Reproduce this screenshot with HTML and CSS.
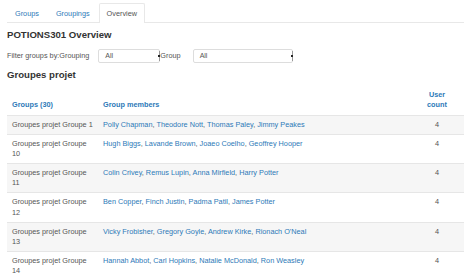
FILE: index.html
```html
<!DOCTYPE html>
<html>
<head>
<meta charset="utf-8">
<link rel="stylesheet" href="styles.css">
</head>
<body>
<div class="tabs">
  <a class="tab" href="#">Groups</a>
  <a class="tab" href="#">Groupings</a>
  <span class="tab active">Overview</span>
</div>
<h2 class="title">POTIONS301 Overview</h2>
<div class="filters">
  <span class="lbl">Filter groups by:Grouping</span>
  <span class="select s1">All<i class="arrow"></i></span>
  <span class="lbl">Group</span>
  <span class="select s2">All<i class="arrow"></i></span>
</div>
<h3 class="heading">Groupes projet</h3>
<table class="groups">
  <colgroup><col class="c1"><col class="c2"><col class="c3"></colgroup>
  <thead>
    <tr><th>Groups (30)</th><th>Group members</th><th class="num">User count</th></tr>
  </thead>
  <tbody>
    <tr><td>Groupes projet Groupe 1</td><td><a href="#">Polly Chapman</a>, <a href="#">Theodore Nott</a>, <a href="#">Thomas Paley</a>, <a href="#">Jimmy Peakes</a></td><td class="num">4</td></tr>
    <tr><td>Groupes projet Groupe 10</td><td><a href="#">Hugh Biggs</a>, <a href="#">Lavande Brown</a>, <a href="#">Joaeo Coelho</a>, <a href="#">Geoffrey Hooper</a></td><td class="num">4</td></tr>
    <tr><td>Groupes projet Groupe 11</td><td><a href="#">Colin Crivey</a>, <a href="#">Remus Lupin</a>, <a href="#">Anna Mirfield</a>, <a href="#">Harry Potter</a></td><td class="num">4</td></tr>
    <tr><td>Groupes projet Groupe 12</td><td><a href="#">Ben Copper</a>, <a href="#">Finch Justin</a>, <a href="#">Padma Patil</a>, <a href="#">James Potter</a></td><td class="num">4</td></tr>
    <tr><td>Groupes projet Groupe 13</td><td><a href="#">Vicky Frobisher</a>, <a href="#">Gregory Goyle</a>, <a href="#">Andrew Kirke</a>, <a href="#">Rionach O'Neal</a></td><td class="num">4</td></tr>
    <tr><td>Groupes projet Groupe 14</td><td><a href="#">Hannah Abbot</a>, <a href="#">Carl Hopkins</a>, <a href="#">Natalie McDonald</a>, <a href="#">Ron Weasley</a></td><td class="num">4</td></tr>
  </tbody>
</table>
</body>
</html>
```
FILE: styles.css
```css
html, body { background: #fff; }
body {
  margin: 0;
  padding: 3px 10px 0 7px;
  font-family: "Liberation Sans", Arial, sans-serif;
  font-size: 7.3px;
  line-height: 10.4px;
  color: #555;
}
a { color: #2d7ab8; text-decoration: none; }
.tabs {
  display: flex;
  border-bottom: 1px solid #e8e8e8;
  height: 19px;
}
.tab {
  display: block;
  padding: 0 7px;
  line-height: 19px;
  height: 19px;
  margin-right: 1px;
  border: 1px solid transparent;
  border-bottom: 0;
  box-sizing: border-box;
}
.tab.active {
  color: #555;
  border-color: #e8e8e8;
  background: #fff;
  height: 20px;
  border-radius: 2px 2px 0 0;
}
.title {
  font-size: 9.6px;
  line-height: 12px;
  font-weight: bold;
  margin: 6px 0 0;
  color: #333;
}
.filters {
  display: flex;
  align-items: center;
  margin-top: 8px;
  height: 14px;
}
.select {
  position: relative;
  display: block;
  box-sizing: border-box;
  height: 14px;
  line-height: 12px;
  border: 1px solid #ddd;
  border-radius: 2px;
  padding-left: 6px;
  background: #fff;
  color: #555;
  font-size: 7px;
}
.s1 { width: 62px; margin-left: 9px; }
.s2 { width: 100px; margin-left: 12px; }
.arrow {
  position: absolute;
  right: -1px;
  top: 1px;
  width: 2px;
  height: 10px;
  border-right: 1px solid #999;
}
.arrow::after {
  content: "";
  position: absolute;
  right: -1px;
  top: 4px;
  width: 2px;
  height: 2px;
  background: #222;
}
.heading {
  font-size: 9.6px;
  line-height: 12px;
  font-weight: bold;
  margin: 6px 0 0;
  color: #333;
}
.groups {
  width: 457px;
  table-layout: fixed;
  border-collapse: collapse;
  margin-top: 5px;
}
.c1 { width: 91px; }
.c3 { width: 54px; }
.groups th {
  text-align: left;
  vertical-align: bottom;
  color: #2d7ab8;
  font-weight: bold;
  padding: 4px 5px;
}
.groups td {
  vertical-align: top;
  padding: 4px 5px 3.5px;
  border-top: 1px solid #e6e6e6;
  color: #555;
}
.groups tbody tr:nth-child(odd) td { background: #f6f6f6; }
.groups .num { text-align: center; padding-left: 10px; padding-right: 10px; }
```
